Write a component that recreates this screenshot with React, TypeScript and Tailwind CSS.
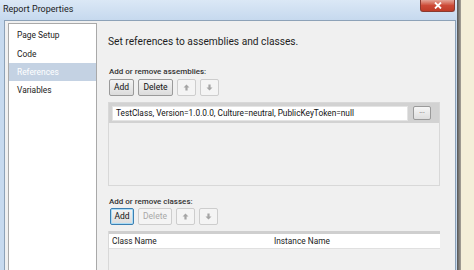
import React from "react";

const font = { fontFamily: 'Roboto, "Open Sans", sans-serif' };

function Btn({ children, w, disabled, focused }: { children?: React.ReactNode; w: string; disabled?: boolean; focused?: boolean }) {
  return (
    <div
      className={`${w} h-[17px] flex items-center justify-center rounded-[2px] border text-[8.5px] leading-none ${
        focused ? "border-[#3c7fb1] shadow-[inset_0_0_0_1px_#a9dcf7]" : disabled ? "border-[#cdcdcd]" : "border-[#9a9a9a]"
      } ${disabled ? "bg-[#f4f4f4] text-[#a8a8a8]" : "bg-gradient-to-b from-[#f4f4f4] to-[#dcdcdc] text-[#111]"}`}
    >
      {children}
    </div>
  );
}

function Arrow({ up }: { up?: boolean }) {
  return (
    <div className="w-[19px] h-[17px] flex items-center justify-center rounded-[2px] border border-[#cdcdcd] bg-[#f4f4f4]">
      <svg width="7" height="7" viewBox="0 0 7 7">
        {up ? (
          <path d="M3.5 0.5 L6.5 3.5 L4.6 3.5 L4.6 6.5 L2.4 6.5 L2.4 3.5 L0.5 3.5 Z" fill="#a5a5a5" />
        ) : (
          <path d="M3.5 6.5 L6.5 3.5 L4.6 3.5 L4.6 0.5 L2.4 0.5 L2.4 3.5 L0.5 3.5 Z" fill="#a5a5a5" />
        )}
      </svg>
    </div>
  );
}

export default function App() {
  return (
    <div className="w-[474px] h-[270px] overflow-hidden flex bg-[#f4efd9] text-[#1a1a1a]" style={font}>
      <div className="w-[457px] h-full flex flex-col bg-[#c7daef]">
        {/* title bar */}
        <div className="h-[20px] flex items-start justify-between bg-gradient-to-b from-[#dbe8f6] to-[#c6d9ee]">
          <span className="pl-[3px] pt-[3px] text-[9px] leading-[12px] text-[#1b1b1b]">Report Properties</span>
          <div className="mr-[2px] w-[35px] h-[12px] rounded-b-[3px] bg-gradient-to-b from-[#e3a497] via-[#cc4a37] to-[#bf3c28] border border-[#8a3a30] border-t-0 flex items-center justify-center">
            <svg width="8" height="7" viewBox="0 0 8 7">
              <path d="M1 0.5 L7 6.5 M7 0.5 L1 6.5" stroke="#fff" strokeWidth="1.8" />
            </svg>
          </div>
        </div>
        {/* body */}
        <div className="flex-1 flex pl-[4px] pr-[1px]">
          <div className="flex-1 flex border-t border-l border-r border-[#8da2b8] bg-[#f0f0f0]">
            {/* nav */}
            <div className="w-[89px] ml-[3px] mt-[2px] bg-white border border-[#a9a9a9] border-b-0 pt-[2px] text-[8.4px] leading-[11px] text-[#222]">
              <div className="h-[19px] pl-[8px] flex items-center">Page Setup</div>
              <div className="h-[18px] pl-[8px] flex items-center">Code</div>
              <div className="h-[18px] pl-[8px] flex items-center bg-[#c4d2e3] text-white">References</div>
              <div className="h-[19px] pl-[8px] flex items-center">Variables</div>
            </div>
            {/* main */}
            <div className="flex-1 pl-[11px] pr-[15px] pt-[14px] flex flex-col">
              <div className="text-[10.2px] leading-[14px] text-[#1e1e1e]">Set references to assemblies and classes.</div>
              <div className="mt-[18px] text-[8px] leading-[10px] font-medium text-[#333] pl-[1px]">Add or remove assemblies:</div>
              <div className="mt-[2px] flex gap-[4px] pl-[1px]">
                <Btn w="w-[25px]">Add</Btn>
                <Btn w="w-[35px]">Delete</Btn>
                <Arrow up />
                <Arrow />
              </div>
              <div className="mt-[6px] h-[84px] border border-[#d8d8d8] flex flex-col">
                <div className="h-[20px] bg-[#d2d2d2] flex items-center pl-[3px] pr-[8px] gap-[5px]">
                  <div className="flex-1 h-[15px] bg-white border border-[#e4e4e4] flex items-center pl-[3px] text-[8.3px] text-[#111] whitespace-nowrap overflow-hidden">
                    TestClass, Version=1.0.0.0, Culture=neutral, PublicKeyToken=null
                  </div>
                  <div className="w-[18px] h-[14px] rounded-[2px] border border-[#9a9a9a] bg-gradient-to-b from-[#f6f6f6] to-[#dedede] flex items-center justify-center text-[7px] leading-none text-[#555] pb-[3px]">
                    ...
                  </div>
                </div>
              </div>
              <div className="mt-[11px] text-[8px] leading-[10px] font-medium text-[#333] pl-[1px]">Add or remove classes:</div>
              <div className="mt-[1px] flex gap-[4px] pl-[2px]">
                <Btn w="w-[24px]" focused>Add</Btn>
                <Btn w="w-[34px]" disabled>Delete</Btn>
                <Arrow up />
                <Arrow />
              </div>
              <div className="mt-[6px] flex-1 border-l border-[#d8d8d8]">
                <div className="border-t-[3px] border-[#cfcfcf] h-[18px] bg-white flex items-center text-[8.3px] text-[#222] border-b border-b-[#e0e0e0]">
                  <div className="w-[165px] pl-[3px]">Class Name</div>
                  <div>Instance Name</div>
                </div>
              </div>
            </div>
          </div>
        </div>
      </div>
      <div className="w-[4px] h-full bg-gradient-to-r from-[#555] to-[#a8a49a]" />
      <div className="flex-1 h-full bg-[#f4efd9]" />
    </div>
  );
}
